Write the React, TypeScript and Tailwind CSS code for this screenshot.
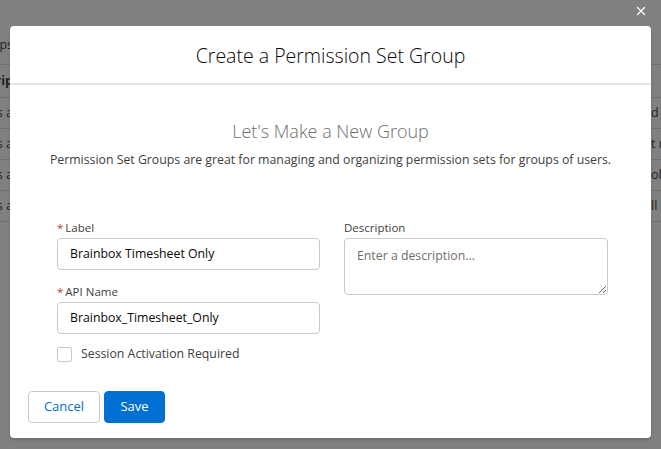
import { X } from 'lucide-react';

const leftBits = [
  { text: 'Groups', bold: false, h: 'h-[65px]', align: 'items-end pb-[9px]' },
  { text: 'Descrip', bold: true, h: 'h-[33px]', align: 'items-center' },
  { text: 'Perms a', bold: false, h: 'h-[31px]', align: 'items-center' },
  { text: 'Perms a', bold: false, h: 'h-[31px]', align: 'items-center' },
  { text: 'Perms a', bold: false, h: 'h-[31px]', align: 'items-center' },
  { text: 'Perms a', bold: false, h: 'h-[31px]', align: 'items-center' },
];

const rightBits = ['', '', 'd', 't re', 'ol', 'll'];

function BackdropPage() {
  return (
    <div className="flex justify-between text-[12.5px] text-[#1f1f1f]">
      <div className="w-[10px] overflow-hidden">
        {leftBits.map((b, i) => (
          <div
            key={i}
            className={`flex justify-end border-b border-[#707070] ${b.h} ${b.align} ${b.bold ? 'font-bold' : ''}`}
          >
            <span className="-mr-[3px] whitespace-nowrap">{b.text}</span>
          </div>
        ))}
      </div>
      <div className="w-[10px] overflow-hidden">
        {rightBits.map((t, i) => (
          <div
            key={i}
            className={`flex items-center border-b border-[#707070] ${i === 0 ? 'h-[65px]' : i === 1 ? 'h-[33px]' : 'h-[31px]'}`}
          >
            <span className="whitespace-nowrap">{t}</span>
          </div>
        ))}
      </div>
    </div>
  );
}

function Field(props: { label: string; required?: boolean; value: string }) {
  return (
    <div>
      <div className="flex h-[18px] items-center text-[11.5px] text-[#3e3e3c]">
        {props.required && <span className="mr-[2px] text-[#c23934]">*</span>}
        {props.label}
      </div>
      <div className="mt-[1px] flex h-[32px] items-center rounded-[4px] border border-[#c9c9c9] px-[12px] text-[12.3px] text-[#080707]">
        {props.value}
      </div>
    </div>
  );
}

export default function App() {
  return (
    <div className="relative h-[449px] w-[661px] overflow-hidden bg-[#808080] font-['Open_Sans',sans-serif]">
      <BackdropPage />

      <button type="button" className="absolute right-[13px] top-[4px] text-white" aria-label="Close">
        <X size={14} strokeWidth={2.2} />
      </button>

      <div className="absolute left-[10px] top-[26px] flex h-[412px] w-[641px] flex-col rounded-[4px] bg-white shadow-[0_2px_3px_rgba(0,0,0,0.16)]">
        <div className="flex h-[59px] items-center justify-center border-b-2 border-[#e5e5e5] pt-[2px] text-[19.5px] font-light text-[#080707]">
          Create a Permission Set Group
        </div>

        <div className="pt-[34px] text-center">
          <div className="text-[18px] leading-[24px] font-light text-[#706e6b]">Let's Make a New Group</div>
          <div className="mt-[8px] text-[12.3px] leading-[18px] text-[#3e3e3c]">
            Permission Set Groups are great for managing and organizing permission sets for groups of users.
          </div>
        </div>

        <div className="mt-[50px] flex gap-[24px] pl-[47px]">
          <div className="flex w-[263px] flex-col gap-[13px]">
            <Field label="Label" required value="Brainbox Timesheet Only" />
            <Field label="API Name" required value="Brainbox_Timesheet_Only" />
            <label className="-mt-[2px] flex items-center gap-[9px] text-[12.3px] text-[#3e3e3c]">
              <span className="h-[15px] w-[15px] rounded-[2px] border border-[#c9c9c9] bg-white" />
              Session Activation Required
            </label>
          </div>
          <div className="w-[264px]">
            <div className="flex h-[18px] items-center text-[11.5px] text-[#3e3e3c]">Description</div>
            <textarea
              placeholder="Enter a description..."
              className="mt-[1px] block h-[57px] w-full resize-y rounded-[4px] border border-[#c9c9c9] px-[12px] py-[8px] text-[12.3px] text-[#080707] outline-none placeholder:text-[#706e6b]"
            />
          </div>
        </div>

        <div className="mt-auto mb-[15px] flex gap-[4px] pl-[18px]">
          <button
            type="button"
            className="h-[32px] w-[72px] rounded-[4px] border border-[#c9c9c9] bg-white text-[13px] text-[#0070d2]"
          >
            Cancel
          </button>
          <button
            type="button"
            className="h-[32px] w-[61px] rounded-[4px] border border-[#0070d2] bg-[#0070d2] text-[13px] text-white"
          >
            Save
          </button>
        </div>
      </div>
    </div>
  );
}
